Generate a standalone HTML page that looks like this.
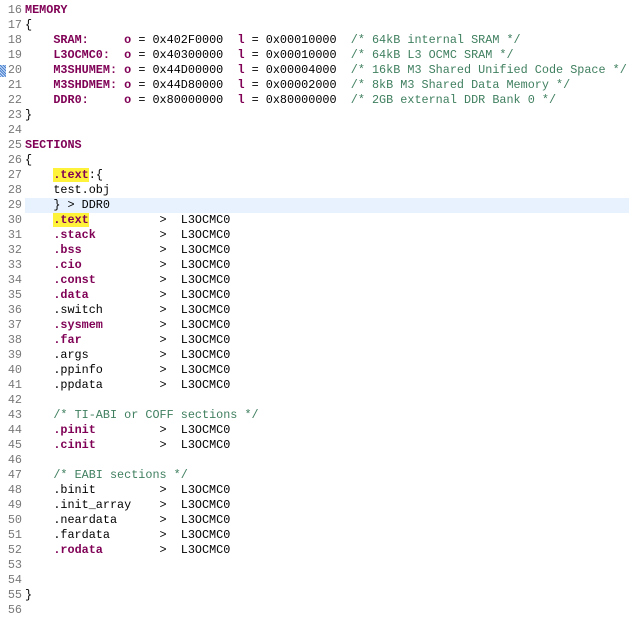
<!DOCTYPE html>
<html><head><meta charset="utf-8"><style>
html,body{margin:0;padding:0;background:#fff;width:629px;height:611px;overflow:hidden}
.ed{position:absolute;left:0;top:3px;width:629px;font-family:"Liberation Mono",monospace;font-size:11.8px;line-height:15px;color:#000}
.r{position:relative;height:15px;white-space:pre}
.n{position:absolute;left:0;width:22px;text-align:right;color:#787878}
.c{position:absolute;left:25px}
.k{color:#7f0055;font-weight:bold}
.m{color:#3f7f5f}
.h{background:#fff23a}
.cur{background:#e8f2fe}
.mk{position:absolute;left:0;top:2px;width:6px;height:12px;background:repeating-linear-gradient(45deg,#4a7fd0 0 1px,#c8dcf6 1px 2px)}
</style></head><body>
<div class="ed">
<div class="r"><span class="n">16</span><span class="c"><span class="k">MEMORY</span></span></div>
<div class="r"><span class="n">17</span><span class="c">{</span></div>
<div class="r"><span class="n">18</span><span class="c">    <span class="k">SRAM:</span>     <span class="k">o</span> = 0x402F0000  <span class="k">l</span> = 0x00010000  <span class="m">/* 64kB internal SRAM */</span></span></div>
<div class="r"><span class="n">19</span><span class="c">    <span class="k">L3OCMC0:</span>  <span class="k">o</span> = 0x40300000  <span class="k">l</span> = 0x00010000  <span class="m">/* 64kB L3 OCMC SRAM */</span></span></div>
<div class="r"><span class="mk"></span><span class="n">20</span><span class="c">    <span class="k">M3SHUMEM:</span> <span class="k">o</span> = 0x44D00000  <span class="k">l</span> = 0x00004000  <span class="m">/* 16kB M3 Shared Unified Code Space */</span></span></div>
<div class="r"><span class="n">21</span><span class="c">    <span class="k">M3SHDMEM:</span> <span class="k">o</span> = 0x44D80000  <span class="k">l</span> = 0x00002000  <span class="m">/* 8kB M3 Shared Data Memory */</span></span></div>
<div class="r"><span class="n">22</span><span class="c">    <span class="k">DDR0:</span>     <span class="k">o</span> = 0x80000000  <span class="k">l</span> = 0x80000000  <span class="m">/* 2GB external DDR Bank 0 */</span></span></div>
<div class="r"><span class="n">23</span><span class="c">}</span></div>
<div class="r"><span class="n">24</span></div>
<div class="r"><span class="n">25</span><span class="c"><span class="k">SECTIONS</span></span></div>
<div class="r"><span class="n">26</span><span class="c">{</span></div>
<div class="r"><span class="n">27</span><span class="c">    <span class="k h">.text</span>:{</span></div>
<div class="r"><span class="n">28</span><span class="c">    test.obj</span></div>
<div class="r cur" style="margin-left:25px"><span class="n" style="left:-25px">29</span><span class="c" style="left:0">    } &gt; DDR0</span></div>
<div class="r"><span class="n">30</span><span class="c">    <span class="k h">.text</span>          &gt;  L3OCMC0</span></div>
<div class="r"><span class="n">31</span><span class="c">    <span class="k">.stack</span>         &gt;  L3OCMC0</span></div>
<div class="r"><span class="n">32</span><span class="c">    <span class="k">.bss</span>           &gt;  L3OCMC0</span></div>
<div class="r"><span class="n">33</span><span class="c">    <span class="k">.cio</span>           &gt;  L3OCMC0</span></div>
<div class="r"><span class="n">34</span><span class="c">    <span class="k">.const</span>         &gt;  L3OCMC0</span></div>
<div class="r"><span class="n">35</span><span class="c">    <span class="k">.data</span>          &gt;  L3OCMC0</span></div>
<div class="r"><span class="n">36</span><span class="c">    .switch        &gt;  L3OCMC0</span></div>
<div class="r"><span class="n">37</span><span class="c">    <span class="k">.sysmem</span>        &gt;  L3OCMC0</span></div>
<div class="r"><span class="n">38</span><span class="c">    <span class="k">.far</span>           &gt;  L3OCMC0</span></div>
<div class="r"><span class="n">39</span><span class="c">    .args          &gt;  L3OCMC0</span></div>
<div class="r"><span class="n">40</span><span class="c">    .ppinfo        &gt;  L3OCMC0</span></div>
<div class="r"><span class="n">41</span><span class="c">    .ppdata        &gt;  L3OCMC0</span></div>
<div class="r"><span class="n">42</span></div>
<div class="r"><span class="n">43</span><span class="c">    <span class="m">/* TI-ABI or COFF sections */</span></span></div>
<div class="r"><span class="n">44</span><span class="c">    <span class="k">.pinit</span>         &gt;  L3OCMC0</span></div>
<div class="r"><span class="n">45</span><span class="c">    <span class="k">.cinit</span>         &gt;  L3OCMC0</span></div>
<div class="r"><span class="n">46</span></div>
<div class="r"><span class="n">47</span><span class="c">    <span class="m">/* EABI sections */</span></span></div>
<div class="r"><span class="n">48</span><span class="c">    .binit         &gt;  L3OCMC0</span></div>
<div class="r"><span class="n">49</span><span class="c">    .init_array    &gt;  L3OCMC0</span></div>
<div class="r"><span class="n">50</span><span class="c">    .neardata      &gt;  L3OCMC0</span></div>
<div class="r"><span class="n">51</span><span class="c">    .fardata       &gt;  L3OCMC0</span></div>
<div class="r"><span class="n">52</span><span class="c">    <span class="k">.rodata</span>        &gt;  L3OCMC0</span></div>
<div class="r"><span class="n">53</span></div>
<div class="r"><span class="n">54</span></div>
<div class="r"><span class="n">55</span><span class="c">}</span></div>
<div class="r"><span class="n">56</span></div>
</div>
</body></html>
